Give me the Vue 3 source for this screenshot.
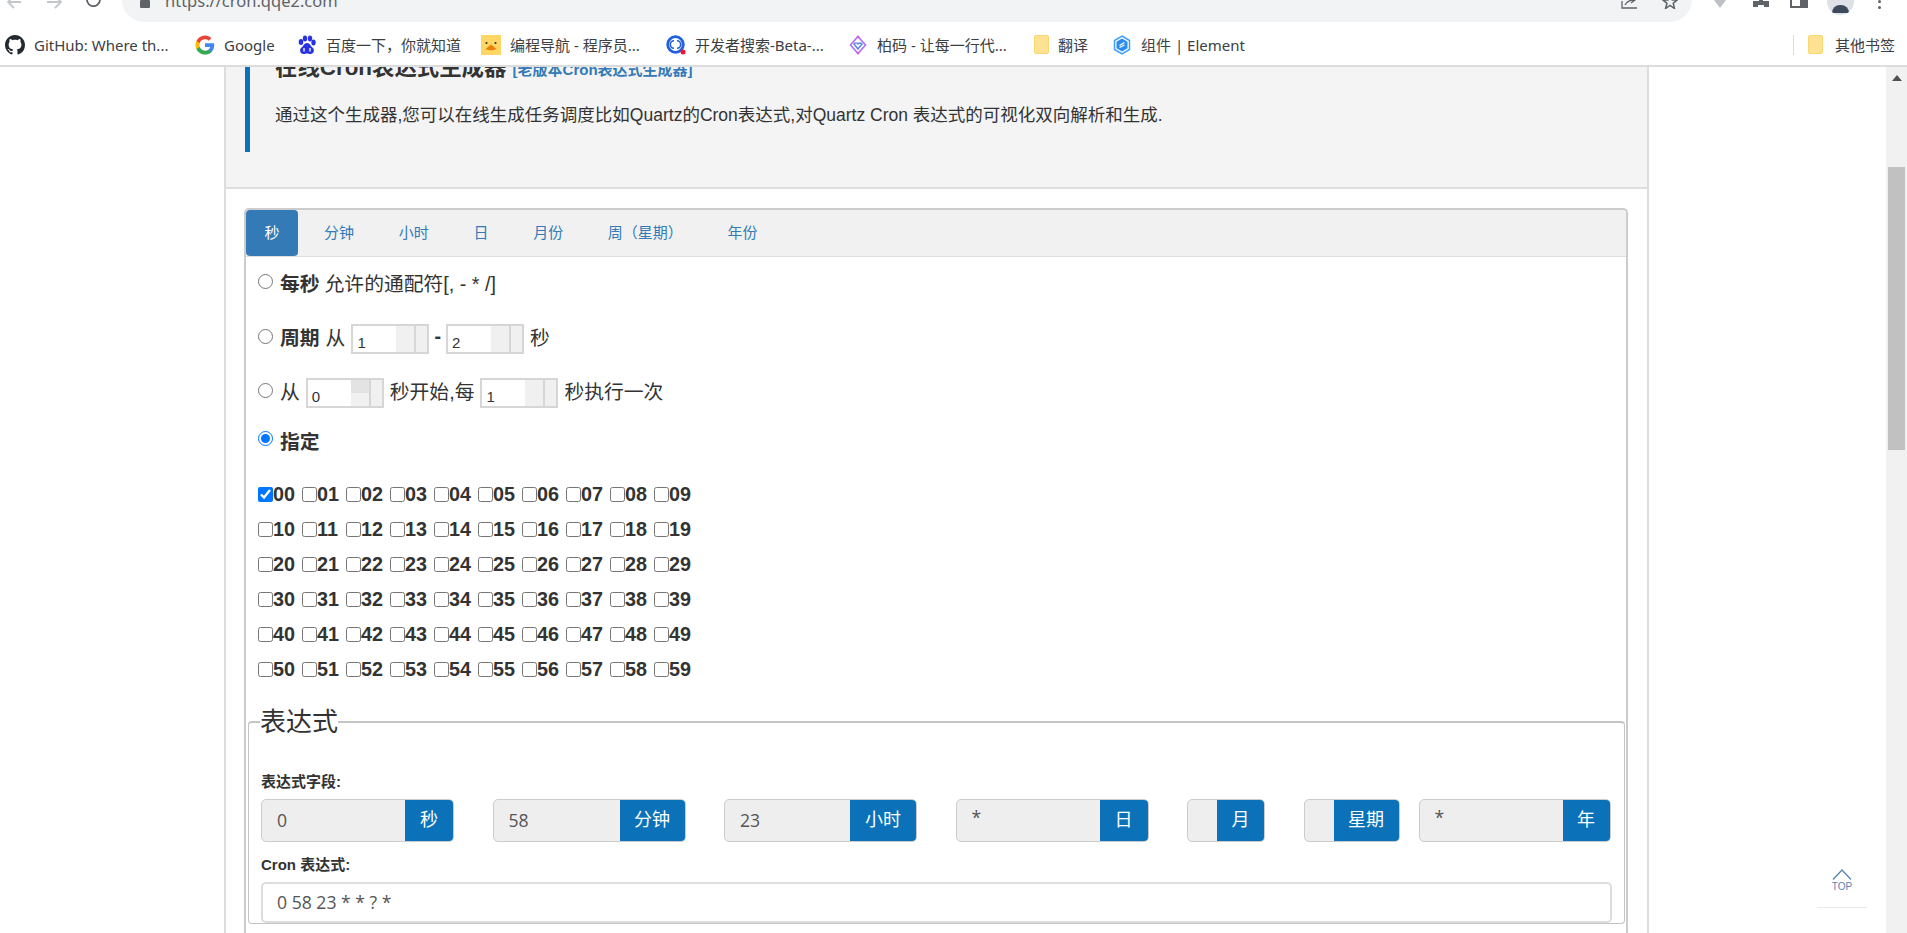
<script setup>
const bookmarks = [
  { key: 'github', text: 'GitHub: Where th...', w: 190 },
  { key: 'google', text: 'Google', w: 102 },
  { key: 'baidu', text: '百度一下，你就知道', w: 184 },
  { key: 'duck', text: '编程导航 - 程序员...', w: 185 },
  { key: 'dev', text: '开发者搜索-Beta-...', w: 182 },
  { key: 'bai', text: '柏码 - 让每一行代...', w: 186 },
  { key: 'folder', text: '翻译', w: 78 },
  { key: 'element', text: '组件 | Element', w: 140 }
]
const tabs = ['秒', '分钟', '小时', '日', '月份', '周（星期）', '年份']
const grid = Array.from({ length: 6 }, (_, r) =>
  Array.from({ length: 10 }, (_, c) => `${r}${c}`)
)
const fields = [
  { value: '0', unit: '秒', w: 193, a: 48 },
  { value: '58', unit: '分钟', w: 193, a: 65 },
  { value: '23', unit: '小时', w: 193, a: 66 },
  { value: '*', unit: '日', w: 193, a: 48 },
  { value: '', unit: '月', w: 78, a: 47 },
  { value: '', unit: '星期', w: 96, a: 65 },
  { value: '*', unit: '年', w: 192, a: 47 }
]
</script>

<template>
  <div class="page">
    <header class="chrome">
      <div class="toolbar">
        <div class="nav">
          <svg class="ic" width="16" height="10" viewBox="0 0 16 10"><path d="M15 2H3M8-4 2 2l6 6" fill="none" stroke="#c4c7ca" stroke-width="1.8"/></svg>
          <svg class="ic i-fwd" width="18" height="10" viewBox="0 0 18 10"><path d="M1 2h13M9-4l6 6-6 6" fill="none" stroke="#c4c7ca" stroke-width="1.8"/></svg>
          <svg class="ic i-rel" width="16" height="10" viewBox="0 0 16 10"><path d="M14 0a6.500 6.500 0 1 1-1.500-4.500M14-2v-4" fill="none" stroke="#5f6368" stroke-width="1.800"/></svg>
        </div>
        <div class="omni">
          <span class="lock"></span>
          <span class="url">https://cron.qqe2.com</span>
          <svg class="ic i-share" width="18" height="9" viewBox="0 0 18 9"><path d="M1 1v7h15M4 5c2-4 5-5 9-5M10-3l4 3-4 3" fill="none" stroke="#5f6368" stroke-width="1.300"/></svg>
          <svg class="ic i-star" width="16" height="9" viewBox="0 0 16 9"><path d="M8-5l2.200 5h5l-4 3.300L12.500 8.500 8 5.500l-4.500 3L5 3.300 1 0h5z" fill="none" stroke="#5f6368" stroke-width="1.500"/></svg>
        </div>
        <div class="tools">
          <svg class="ic i-fun" width="12" height="8" viewBox="0 0 12 8"><path d="M0 0h12L6 8z" fill="#bdc1c6"/></svg>
          <svg class="ic i-puz" width="18" height="8" viewBox="0 0 18 8"><path d="M2 1h6V0h4v1h6v6h-5V5H7v2H2z" fill="#5f6368"/></svg>
          <svg class="ic i-sq" width="18" height="8" viewBox="0 0 18 8"><path d="M0 0h18v8H0z" fill="#5f6368"/><path d="M2 0h8v6H2z" fill="#fff"/></svg>
          <span class="avatar"><span class="avatar-in"></span></span>
          <span class="dots"><i></i><i></i></span>
        </div>
      </div>
      <div class="bookmarks">
        <div v-for="b in bookmarks" :key="b.key" class="bm" :style="{ width: b.w + 'px' }">
          <svg v-if="b.key === 'github'" class="bi" viewBox="0 0 16 16"><path fill="#24292f" d="M8 0C3.580 0 0 3.580 0 8c0 3.540 2.290 6.530 5.470 7.590.4.070.55-.17.55-.38 0-.19-.01-.82-.01-1.490-2.010.37-2.530-.49-2.690-.94-.09-.23-.48-.94-.82-1.130-.28-.15-.68-.52-.01-.53.63-.01 1.080.58 1.230.82.72 1.210 1.870.87 2.330.66.07-.52.28-.87.51-1.070-1.780-.2-3.640-.89-3.640-3.950 0-.87.31-1.590.82-2.150-.08-.2-.36-1.020.08-2.120 0 0 .67-.21 2.200.82.64-.18 1.320-.27 2-.27s1.360.09 2 .27c1.530-1.040 2.200-.82 2.200-.82.44 1.100.16 1.920.08 2.120.51.56.82 1.270.82 2.150 0 3.070-1.870 3.750-3.650 3.950.29.25.54.73.54 1.480 0 1.070-.01 1.930-.01 2.200 0 .21.15.46.55.38A8.010 8.010 0 0 0 16 8c0-4.420-3.580-8-8-8z"/></svg>
          <svg v-else-if="b.key === 'google'" class="bi" viewBox="0 0 24 24"><path fill="#4285f4" d="M23 12.300c0-.8-.1-1.600-.2-2.300H12v4.400h6.200c-.3 1.400-1.100 2.600-2.300 3.400v2.800h3.700c2.100-2 3.400-4.900 3.400-8.300z"/><path fill="#34a853" d="M12 23.500c3.100 0 5.700-1 7.600-2.800l-3.700-2.900c-1 .7-2.300 1.100-3.900 1.100-3 0-5.500-2-6.400-4.700H1.800v2.900c1.900 3.800 5.800 6.400 10.200 6.400z"/><path fill="#fbbc05" d="M5.600 14.200c-.5-1.400-.5-3 0-4.400V6.900H1.800c-1.600 3.200-1.600 7 0 10.200z"/><path fill="#ea4335" d="M12 5.100c1.700 0 3.200.6 4.400 1.700l3.300-3.300C17.700 1.600 15.100.5 12 .5 7.600.5 3.700 3.100 1.800 6.900l3.800 2.900C6.500 7.100 9 5.100 12 5.100z"/></svg>
          <svg v-else-if="b.key === 'baidu'" class="bi" viewBox="0 0 20 20"><g fill="#2932e1"><ellipse cx="4" cy="7" rx="2.300" ry="3"/><ellipse cx="8" cy="3.500" rx="2.200" ry="3"/><ellipse cx="13" cy="3.500" rx="2.200" ry="3"/><ellipse cx="16.500" cy="7.500" rx="2.200" ry="3"/><path d="M10 8c-3 0-3.500 3-5.500 4.500C2 14.500 3 19 6.500 19c1.500 0 2.300-.5 3.500-.5s2 .5 3.500.5c3.500 0 4.500-4.500 2-6.500C13.500 11 13 8 10 8z"/></g><path d="M7 13v3.500M13 13v3.500" stroke="#fff" stroke-width="1.300"/></svg>
          <svg v-else-if="b.key === 'duck'" class="bi" viewBox="0 0 20 20"><rect width="20" height="20" fill="#fdd663"/><circle cx="5.500" cy="8" r="1.100" fill="#333"/><circle cx="14.500" cy="8" r="1.100" fill="#333"/><path d="M4.500 14 10 9.500l5.500 4.500c-3 1.800-8 1.800-11 0z" fill="#e8810c"/></svg>
          <svg v-else-if="b.key === 'dev'" class="bi" viewBox="0 0 20 20"><circle cx="9.500" cy="9.500" r="7.800" fill="none" stroke="#1f5fe0" stroke-width="2.800"/><path d="M8 5.800a3.700 3.700 0 0 0 0 7.400M11 5.800a3.700 3.700 0 0 1 0 7.400" fill="none" stroke="#1f5fe0" stroke-width="1.600"/><circle cx="17" cy="17" r="2.500" fill="#f0142f"/></svg>
          <svg v-else-if="b.key === 'bai'" class="bi" viewBox="0 0 20 20"><path d="M10 1.500 17.500 10 10 18.500 2.500 10z" fill="none" stroke="#b06ef0" stroke-width="1.600"/><path d="M6 9c2-2 3-1 4 0 1-1 2-2 4 0l-4 5z" fill="none" stroke="#5d86f2" stroke-width="1.500"/><circle cx="10" cy="2" r="1.300" fill="#e055e6"/><circle cx="10" cy="18" r="1.300" fill="#e055e6"/></svg>
          <span v-else-if="b.key === 'folder'" class="folder"></span>
          <svg v-else class="bi" viewBox="0 0 20 20"><path d="M10 1 17.500 5.500v9L10 19l-7.500-4.500v-9z" fill="#fff" stroke="#409eff" stroke-width="1.500"/><path d="M10 3.500 15.500 6.700v6.600L10 16.500l-5.500-3.200V6.700z" fill="#2a8cf0"/><path d="M7.500 10.500l5-3M7.500 12.500l5-2.500" stroke="#fff" stroke-width="1.300"/></svg>
          <span class="bt">{{ b.text }}</span>
        </div>
        <div class="bm-right">
          <span class="folder"></span>
          <span class="bt">其他书签</span>
        </div>
      </div>
    </header>

    <div class="viewport">
      <main class="main">
        <div class="container">
          <section class="hero">
            <div class="hero-in">
              <h1 class="title">在线Cron表达式生成器 <a class="old">[老版本Cron表达式生成器]</a></h1>
              <p class="desc">通过这个生成器,您可以在线生成任务调度比如Quartz的Cron表达式,对Quartz Cron 表达式的可视化双向解析和生成.</p>
            </div>
          </section>

          <section class="panel">
            <nav class="tabs">
              <a v-for="(t, i) in tabs" :key="t" class="tab" :class="{ active: i === 0 }">{{ t }}</a>
            </nav>
            <div class="opts">
              <label class="row r1"><input class="radio" type="radio" name="m" /><b>每秒</b> <span>允许的通配符[, - * /]</span></label>
              <label class="row r2">
                <input class="radio" type="radio" name="m" /><b>周期</b> <span>从</span>
                <span class="num"><input class="num-in" value="1" /><i class="spin"></i><i class="tail"></i></span>
                <span class="dash">-</span>
                <span class="num"><input class="num-in" value="2" /><i class="spin"></i><i class="tail"></i></span>
                <span>秒</span>
              </label>
              <label class="row r3">
                <input class="radio" type="radio" name="m" /><span>从</span>
                <span class="num"><input class="num-in" value="0" /><i class="spin hover"></i><i class="tail"></i></span>
                <span>秒开始,每</span>
                <span class="num"><input class="num-in" value="1" /><i class="spin"></i><i class="tail"></i></span>
                <span>秒执行一次</span>
              </label>
              <label class="row r4"><input class="radio" type="radio" name="m" checked /><b>指定</b></label>
              <div class="checks">
                <div v-for="(line, r) in grid" :key="r" class="cline">
                  <label v-for="n in line" :key="n" class="chk"><input type="checkbox" class="box" :checked="n === '00'" /><b>{{ n }}</b></label>
                </div>
              </div>
              <fieldset class="fs">
                <legend class="lg">表达式</legend>
                <div class="lab lab1">表达式字段:</div>
                <div class="fields">
                  <div v-for="f in fields" :key="f.unit" class="field" :style="{ width: f.w + 'px' }">
                    <span class="val" :class="{ star: f.value === '*' }">{{ f.value }}</span>
                    <span class="addon" :style="{ width: f.a + 'px' }">{{ f.unit }}</span>
                  </div>
                </div>
                <div class="lab lab2">Cron 表达式:</div>
                <div class="cron">0 58 23 * * ? *</div>
              </fieldset>
            </div>
          </section>
        </div>
        <div class="top">
          <svg width="20" height="11" viewBox="0 0 20 11"><path d="M1 10.500 10 1l9 9.500" fill="none" stroke="#5b84b1" stroke-width="1.300"/></svg>
          <span class="top-t">TOP</span>
          <i class="top-l"></i>
        </div>
      </main>
      <aside class="sb">
        <i class="sb-up"></i>
        <i class="sb-th"></i>
      </aside>
    </div>
  </div>
</template>

<style>
html, body { margin: 0; overflow: hidden; background: #fff; }
</style>

<style scoped>
.page {
  width: 1907px; height: 933px; overflow: hidden; display: flex; flex-direction: column;
  font-family: "Liberation Sans", "Noto Sans CJK SC", sans-serif; color: #333;
}
.chrome { height: 67px; box-sizing: border-box; border-bottom: 2px solid #dcdcdc; background: #fff; flex: none; }
.toolbar { height: 22px; display: flex; }
.ic { display: block; flex: none; }
.nav { width: 122px; flex: none; display: flex; padding-left: 6px; box-sizing: border-box; }
.i-fwd { margin-left: 24px; }
.i-rel { margin-left: 22px; }
.omni {
  width: 1570px; flex: none; height: 22px; background: #f1f3f4; border-radius: 0 0 22px 22px;
  display: flex; position: relative;
}
.lock { width: 10px; height: 8px; background: #5f6368; margin-left: 18px; flex: none; border-radius: 1px; }
.url {
  margin-left: 15px; font: 16.500px/16px "Noto Sans", "Liberation Sans", sans-serif; color: #5f6368;
  margin-top: -7px; height: 16px; width: 1456px; flex: none;
}
.i-share { margin-left: 0; height: 9px; }
.i-star { margin-left: 23px; }
.tools { display: flex; flex: 1; }
.i-fun { margin-left: 22px; }
.i-puz { margin-left: 25px; }
.i-sq { margin-left: 21px; }
.avatar { width: 27px; height: 15px; background: #dee1e6; border-radius: 0 0 14px 14px; margin-left: 19px; overflow: hidden; display: flex; justify-content: center; align-items: flex-end; flex: none; }
.avatar-in { width: 17px; height: 8px; background: #3c4a5c; border-radius: 9px 9px 0 0; margin-bottom: 2px; }
.dots { display: flex; flex-direction: column; gap: 3px; margin-left: 24px; }
.dots i { width: 3px; height: 3px; background: #5f6368; border-radius: 50%; display: block; }

.bookmarks { display: flex; align-items: center; height: 43px; padding: 2px 0 0 5px; box-sizing: border-box; }
.bm { display: flex; align-items: center; flex: none; height: 20px; }
.bi { width: 20px; height: 20px; flex: none; }
.bt { font: 15px/20px "Noto Sans", "Noto Sans CJK SC", sans-serif; color: #3c4043; margin-left: 9px; white-space: nowrap; }
.folder { width: 15px; height: 19px; background: #fde293; border: 1px solid #fbd774; box-sizing: border-box; border-radius: 2px; flex: none; }
.bm-right { margin-left: auto; display: flex; align-items: center; border-left: 1px solid #dadce0; height: 20px; padding-left: 14px; margin-right: 12px; }
.bm-right .bt { margin-left: 12px; }

.viewport { flex: 1; display: flex; min-height: 0; }
.main { flex: 1; position: relative; overflow: hidden; min-width: 0; background: #fff; }
.container { width: 1425px; margin-left: 224px; box-sizing: border-box; border-left: 2px solid #ddd; border-right: 2px solid #ddd; }
.hero { height: 122px; box-sizing: border-box; background: #f4f4f4; border-bottom: 2px solid #ddd; padding-left: 19px; }
.hero-in { height: 85px; box-sizing: border-box; border-left: 5px solid #0b72b9; padding-left: 25px; overflow: hidden; }
.title { margin: -11px 0 0; font-size: 22.400px; line-height: 24px; font-weight: 700; color: #333; white-space: nowrap; }
.old { font-size: 15px; color: #337ab7; font-weight: 700; }
.desc { margin: 21px 0 0; font-size: 17.500px; line-height: 24px; color: #333; white-space: nowrap; }

.panel { margin: 19px 19px 0 18px; border: 2px solid #ccc; border-bottom: 0; border-radius: 5px 5px 0 0; }
.tabs { height: 47px; box-sizing: border-box; background: #f1f1f1; border-bottom: 1px solid #ddd; display: flex; border-radius: 4px 4px 0 0; }
.tab { display: block; padding: 0 18px; margin-right: 8.700px; font-size: 15px; line-height: 46px; color: #337ab7; }
.tab.active { background: #337ab7; color: #fff; border-radius: 4px; padding: 0 18.500px; margin-right: 8px; }
.opts { padding: 11px 0 40px 12px; font-size: 19.800px; }
.row { display: flex; align-items: center; height: 30px; }
.row span, .row b { white-space: nowrap; }
.r1 b, .r2 b { margin-right: 5px; }
.r1 b, .r1 > span { margin-bottom: 2px; }
.r2 > b, .r2 > span:not(.num), .r3 > span:not(.num) { margin-bottom: 5px; }
.r2 > b { margin-right: 6px; }
.r2 { margin-top: 26px; }
.r3 { margin-top: 24px; }
.r4 { margin-top: 17px; }
.radio { width: 15px; height: 15px; margin: 0 7px 3px 0; accent-color: #0075ff; flex: none; }
.r2 .radio, .r3 .radio { margin-bottom: 6px; }
.dash { font-weight: 700; margin: 0 -1px; }
.num { display: flex; width: 78px; height: 30px; box-sizing: border-box; border: 2px solid #d6d6d6; margin: 0 6px; background: #f0f0f0; flex: none; }
.num-in { width: 43px; border: 0; padding: 7px 0 0 4px; box-sizing: border-box; font: 15px "Liberation Sans", sans-serif; color: #333; background: #fff; outline: 0; height: 26px; }
.spin { width: 18px; background: #f0f0f0; display: block; border-right: 2px solid #d6d6d6; }
.spin.hover { background: linear-gradient(#e3e3e3 50%, #f0f0f0 50%); }
.tail { flex: 1; background: #f0f0f0; display: block; }
.checks { margin-top: 22px; }
.cline { height: 35px; display: flex; align-items: center; }
.chk { width: 44px; flex: none; display: flex; align-items: center; }
.box { width: 15px; height: 15px; margin: 0; accent-color: #0075ff; flex: none; }
.chk b { font-size: 19.800px; }

.fs { margin: 22px 0 0 -10px; width: 1377px; box-sizing: border-box; border: 1px solid #c4c4c4; border-top-width: 2px; border-radius: 4px; padding: 0 11px 0 12px; min-width: 0; }
.lg { padding: 0; margin: 1px 0 0 -1px; font-size: 26px; line-height: 26px; color: #333; }
.lab { font-size: 15px; line-height: 20px; font-weight: 700; color: #333; }
.lab1 { margin-top: 37px; }
.lab2 { margin-top: 13px; }
.fields { display: flex; margin-top: 7px; }
.field { height: 43px; box-sizing: border-box; border: 1px solid #ccc; border-radius: 5px; background: #eee; display: flex; flex: none; overflow: hidden; margin-right: 38.500px; }
.field:nth-child(6) { margin-right: 19px; }
.val { flex: 1; font: 17.600px/41px "Open Sans", "Liberation Sans", sans-serif; padding-left: 15px; color: #555; }
.val.star { line-height: 34px; }
.addon { flex: none; background: #0b72b9; color: #fff; font-size: 18px; line-height: 41px; text-align: center; }
.cron { margin-top: 7px; width: 1351px; height: 41px; box-sizing: border-box; border: 2px solid #ddd; border-radius: 5px; font: 17.600px/37px "Open Sans", "Liberation Sans", sans-serif; padding-left: 14px; color: #555; }

.top { position: absolute; left: 1817px; top: 802px; width: 50px; display: flex; flex-direction: column; align-items: center; }
.top-t { font-size: 10px; line-height: 12px; color: #5b84b1; margin-top: 1px; }
.top-l { display: block; width: 50px; height: 1px; background: #eaeaea; margin-top: 14px; }

.sb { width: 21px; flex: none; background: #f1f1f1; position: relative; }
.sb-up { position: absolute; left: 6px; top: 8px; width: 0; height: 0; border: 5px solid transparent; border-top: 0; border-bottom: 6px solid #505050; }
.sb-th { position: absolute; left: 2px; top: 100px; width: 17px; height: 283px; background: #c1c1c1; }
</style>
